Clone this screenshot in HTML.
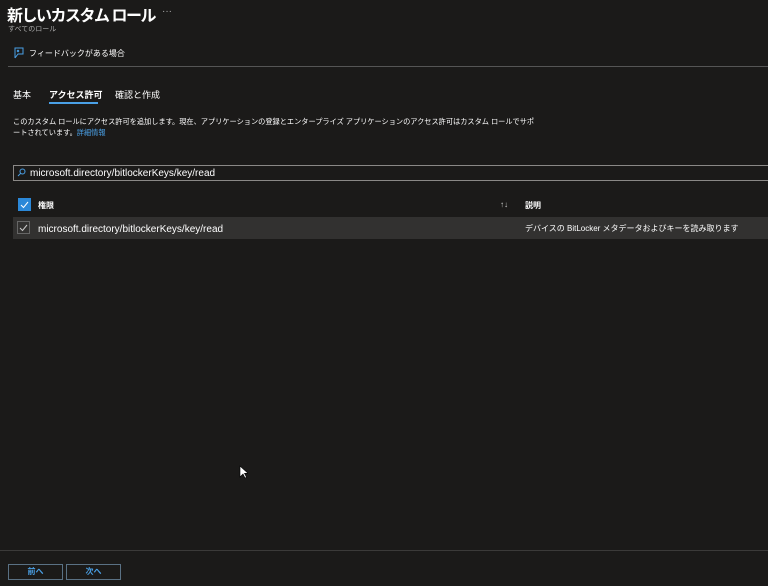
<!DOCTYPE html>
<html><head><meta charset="utf-8"><style>
body{margin:0;width:768px;height:586px;background:#1b1a19;color:#fff;font-family:"Liberation Sans","Noto Sans CJK JP",sans-serif;position:relative;overflow:hidden}
.a{position:absolute;white-space:nowrap}
</style></head><body>
<div class="a" style="left:7px;top:2px;font-size:16px;font-weight:bold;letter-spacing:-1.5px">新しいカスタム ロール</div>
<div class="a" style="left:162px;top:6px;font-size:10px;color:#aaa">···</div>
<div class="a" style="left:8px;top:24px;font-size:7px;color:#aaa">すべてのロール</div>
<svg class="a" style="left:13px;top:47px" width="12" height="12" viewBox="0 0 12 12"><path d="M2 11V1h8v6H5L2 11M4 3l2 2M6 3L4 5" stroke="#4aa0e6" fill="none" stroke-width="1"/></svg>
<div class="a" style="left:29px;top:48px;font-size:8px">フィードバックがある場合</div>
<div class="a" style="left:8px;top:66px;width:760px;height:1px;background:#555"></div>
<div class="a" style="left:13px;top:88px;font-size:9px">基本</div>
<div class="a" style="left:49px;top:88px;font-size:9px;font-weight:bold">アクセス許可</div>
<div class="a" style="left:49px;top:102px;width:49px;height:2px;background:#4aa0e6"></div>
<div class="a" style="left:115px;top:88px;font-size:9px">確認と作成</div>
<div class="a" style="left:13px;top:116px;font-size:7.2px;line-height:11px">このカスタム ロールにアクセス許可を追加します。現在、アプリケーションの登録とエンタープライズ アプリケーションのアクセス許可はカスタム ロールでサポ<br>ートされています。<span style="color:#4aa0e6">詳細情報</span></div>
<div class="a" style="left:13px;top:165px;width:760px;height:16px;border:1px solid #8a8886;box-sizing:border-box"></div>
<svg class="a" style="left:17px;top:168px" width="9" height="9" viewBox="0 0 9 9"><circle cx="5.5" cy="3.5" r="2.5" stroke="#4aa0e6" fill="none"/><path d="M3.7 5.3L1 8" stroke="#4aa0e6"/></svg>
<div class="a" style="left:30px;top:168px;font-size:10px">microsoft.directory/bitlockerKeys/key/read</div>
<div class="a" style="left:18px;top:198px;width:13px;height:13px;background:#2b88d8"></div>
<svg class="a" style="left:18px;top:198px" width="13" height="13"><path d="M3 7l2.5 2.5L10 4" stroke="#fff" fill="none"/></svg>
<div class="a" style="left:38px;top:200px;font-size:8px;font-weight:bold">権限</div>
<div class="a" style="left:500px;top:200px;font-size:8px;color:#ccc">↑↓</div>
<div class="a" style="left:525px;top:200px;font-size:8px;font-weight:bold">説明</div>
<div class="a" style="left:13px;top:217px;width:755px;height:22px;background:#323130"></div>
<div class="a" style="left:17px;top:221px;width:13px;height:13px;border:1px solid #666;box-sizing:border-box"></div>
<svg class="a" style="left:17px;top:221px" width="13" height="13"><path d="M3 7l2.5 2.5L10 4" stroke="#ccc" fill="none"/></svg>
<div class="a" style="left:38px;top:224px;font-size:10px">microsoft.directory/bitlockerKeys/key/read</div>
<div class="a" style="left:525px;top:223px;font-size:8px">デバイスの BitLocker メタデータおよびキーを読み取ります</div>
<div class="a" style="left:0;top:550px;width:768px;height:1px;background:#3b3a39"></div>
<div class="a" style="left:8px;top:564px;width:55px;height:16px;border:1px solid #5a7184;box-sizing:border-box;text-align:center;font-size:8px;line-height:14px;color:#4aa0e6;font-weight:bold">前へ</div>
<div class="a" style="left:66px;top:564px;width:55px;height:16px;border:1px solid #5a7184;box-sizing:border-box;text-align:center;font-size:8px;line-height:14px;color:#4aa0e6;font-weight:bold">次へ</div>
<svg class="a" style="left:239px;top:465px" width="9" height="14"><path d="M1 1v11l3-3 2 4 1.5-.7-2-4H9z" fill="#fff" stroke="#000" stroke-width=".6"/></svg>
</body></html>
